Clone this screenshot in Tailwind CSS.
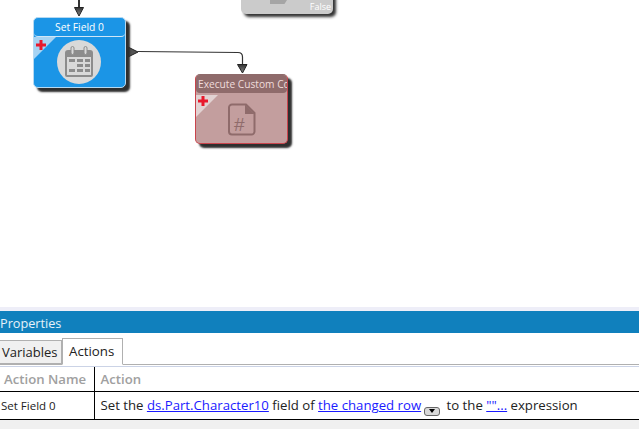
<!DOCTYPE html>
<html lang="en">
<head>
<meta charset="UTF-8">
<title>Workflow designer</title>
<script src="https://cdn.jsdelivr.net/npm/@tailwindcss/browser@4"></script>
</head>
<body class="bg-white overflow-hidden font-['Open_Sans',sans-serif]">
<div class="w-[639px] h-[429px] flex flex-col overflow-hidden">
    <!-- Canvas -->
    <div class="relative h-[307px] shrink-0 overflow-hidden bg-white">
        <!-- Connectors -->
        <svg class="absolute left-0 top-0" width="639" height="307" fill="none">
            <defs>
                <linearGradient id="arrowDown" x1="0" y1="0" x2="0" y2="1">
                    <stop offset="0" stop-color="#333"/>
                    <stop offset="1" stop-color="#888"/>
                </linearGradient>
            </defs>
            <path d="M79 0V8" stroke="#333" stroke-width="2"/>
            <path d="M74.500 7.500H83.500L79 16Z" fill="url(#arrowDown)" stroke="#222"/>
            <path d="M138 51.500L238 52.500Q242.500 52.500 242.500 57V65" stroke="#333" stroke-width="1.200"/>
            <path d="M128 47L138 52L128 57Z" fill="#555" stroke="#222"/>
            <path d="M237.500 64.500H247L242.500 73Z" fill="url(#arrowDown)" stroke="#222"/>
        </svg>

        <!-- False node, cut off by the top edge -->
        <div class="absolute left-[241px] top-[-50px] w-[92px] h-[64px] rounded-[5px] bg-[#cbcbcb] shadow-[3px_3px_3px_#333]">
            <div class="absolute left-[29px] top-[50px] w-[17px] h-[4px] bg-[#a5a5a5] [clip-path:polygon(0_0,100%_0,85%_100%,0_100%)]"></div>
            <span class="absolute right-[2px] bottom-[1px] text-[9px] leading-[12px] text-white">False</span>
        </div>

        <!-- Set Field node -->
        <div class="absolute left-[33px] top-[17px] w-[93px] h-[71px] rounded-[5px] bg-[#1b95e6] border border-[#b5d9f2] shadow-[4px_4px_2px_#2e2e2e] overflow-hidden">
            <div class="h-[19px] border-b border-[#cfe6f7] rounded-b-[4px] text-center text-white text-[10.300px] leading-[19px]">Set Field 0</div>
            <div class="absolute left-0 top-[19px] w-[22px] h-[22px] bg-[#a6d3f3] [clip-path:polygon(0_0,100%_0,0_100%)]"></div>
            <svg class="absolute left-[2px] top-[22px]" width="10" height="10"><path d="M3.500 0H6.500V3.500H10V6.500H6.500V10H3.500V6.500H0V3.500H3.500Z" fill="#e8192c"/></svg>
            <div class="absolute left-[23px] top-[22px] w-[44px] h-[44px] rounded-full bg-[#d9d9d9] flex items-center justify-center">
                <svg width="30" height="32" viewBox="0 0 30 32" fill="none">
                    <path d="M1 7a3 3 0 0 1 3-3h22a3 3 0 0 1 3 3v22a2 2 0 0 1-2 2H3a2 2 0 0 1-2-2Z" fill="#8c8c8c"/>
                    <rect x="7" y="0.500" width="3" height="8" rx="1.500" fill="#d9d9d9" stroke="#8c8c8c"/>
                    <rect x="20" y="0.500" width="3" height="8" rx="1.500" fill="#d9d9d9" stroke="#8c8c8c"/>
                    <path d="M3 11H27V29H3Z" fill="#d9d9d9"/>
                    <path d="M5 13h6v3H5ZM13 13h6v3h-6ZM21 13h5v3h-5ZM13 18h6v3h-6ZM21 18h5v3h-5ZM5 23h6v3H5ZM13 23h6v3h-6ZM21 23h5v3h-5Z" fill="#8c8c8c"/>
                </svg>
            </div>
        </div>

        <!-- Execute Custom Code node -->
        <div class="absolute left-[195px] top-[74px] w-[93px] h-[70px] rounded-[5px] bg-[#c39e9e] border border-[#c9444c] border-t-[#8f6b6b] shadow-[4px_4px_2px_#2e2e2e] overflow-hidden">
            <div class="h-[18px] rounded-b-[4px] bg-[#8f6b6b] pl-[2px] overflow-hidden whitespace-nowrap text-[#f0dcdc] text-[10.200px] leading-[19px]">Execute Custom Code</div>
            <div class="absolute left-0 top-[20px] w-[22px] h-[22px] bg-[#e2d2d2] [clip-path:polygon(0_0,100%_0,0_100%)]"></div>
            <svg class="absolute left-[2px] top-[21px]" width="10" height="10"><path d="M3.500 0H6.500V3.500H10V6.500H6.500V10H3.500V6.500H0V3.500H3.500Z" fill="#e8192c"/></svg>
            <svg class="absolute left-[32px] top-[28px]" width="28" height="33" viewBox="0 0 28 33" fill="none">
                <path d="M4 1.500H18L26.500 10V28.500a3 3 0 0 1-3 3H4a3 3 0 0 1-3-3V4.500a3 3 0 0 1 3-3Z" stroke="#8f6b6b" stroke-width="2"/>
                <path d="M17 1.500V11H26.500Z" fill="#8f6b6b"/>
                <text x="6" y="28" font-family="Liberation Sans, sans-serif" font-size="19" fill="#8f6b6b">#</text>
            </svg>
        </div>
    </div>

    <!-- Properties panel -->
    <div class="h-[4px] shrink-0 bg-[#eeeef8]"></div>
    <div class="h-[22px] shrink-0 bg-[#1080bd] text-white/90 text-[12.700px] leading-[24px]">Properties</div>
    <div class="h-[32px] shrink-0 flex items-end border-b border-[#b0b0b0] relative">
        <div class="h-[24px] w-[62px] bg-[#f0f0f0] border border-[#b0b0b0] border-l-0 text-[13px] leading-[23px] pl-[2px] text-[#222]">Variables</div>
        <div class="h-[27px] w-[61px] -mb-px bg-white border border-[#b0b0b0] border-b-white text-[13.300px] leading-[25px] pl-[6px] text-[#222]">Actions</div>
    </div>
    <div class="h-[2px] shrink-0 border-b border-[#cbd3e6]"></div>
    <table class="w-full shrink-0 border-collapse table-fixed">
        <tbody>
            <tr class="h-[24px] border-b border-black text-[13.200px] font-semibold text-[#a0a0a0]">
                <td class="w-[94px] pl-[4px] pt-[2px] border-r border-black">Action Name</td>
                <td class="pl-[6px] pt-[2px]">Action</td>
            </tr>
            <tr class="h-[28px] border-b border-black text-[#222]">
                <td class="pl-[1px] pt-[2px] border-r border-black text-[11.500px]">Set Field 0</td>
                <td class="pl-[6px] pt-[2px] text-[13.200px] whitespace-nowrap">
                    Set the <a class="text-[#1a1aff] underline">ds.Part.Character10</a> field of <a class="text-[#1a1aff] underline">the changed row</a><span class="inline-flex align-[-3px] items-center justify-center w-[16px] h-[9px] mx-[3px] rounded-[3px] bg-[#d8d8d8] border border-[#666]"><span class="w-0 h-0 border-x-[3.500px] border-x-transparent border-t-[4px] border-t-black"></span></span> to the <a class="text-[#1a1aff] underline">""...</a> expression
                </td>
            </tr>
        </tbody>
    </table>
    <div class="flex-1 bg-[#f0f0f0]"></div>
</div>
</body>
</html>
